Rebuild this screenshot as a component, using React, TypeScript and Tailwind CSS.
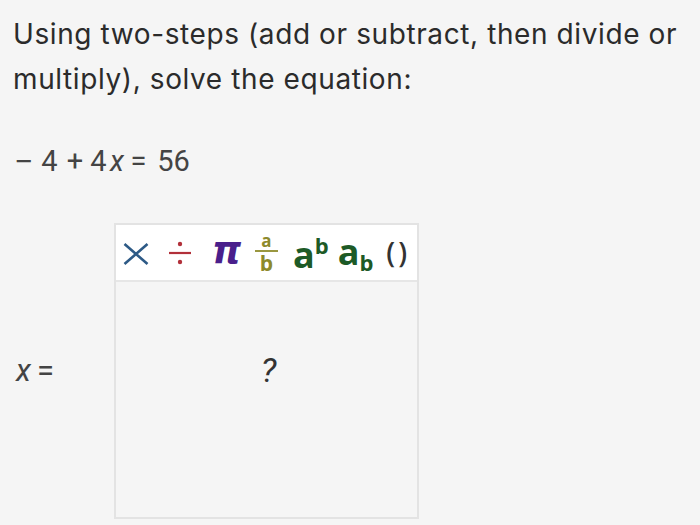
const mathFont = { fontFamily: "Roboto, 'Liberation Sans', sans-serif" };
const iconFont = { fontFamily: "'Open Sans', 'DejaVu Sans', sans-serif" };

export default function App() {
  return (
    <div className="w-[700px] h-[525px] bg-[#f5f5f5] overflow-hidden">
      <p
        className="pl-[13px] pt-[12px] text-[28px] leading-[45px] text-[#2b2b2b] tracking-[0.6px]"
        style={{ fontFamily: "Inter, 'Noto Sans', sans-serif" }}
      >
        Using two-steps (add or subtract, then divide or multiply), solve the equation:
      </p>

      <div className="pl-[12px] mt-[41px] text-[29px] leading-[36px] text-[#444] flex" style={mathFont}>
        <span className="w-[24px] text-center" style={{ fontFamily: "'Liberation Sans', sans-serif" }}>−</span>
        <span className="w-[27px] text-center">4</span>
        <span className="w-[24px] text-center">+</span>
        <span className="w-[23px] text-center">4</span>
        <span className="w-[10px] text-center italic">x</span>
        <span className="w-[37px] text-center">=</span>
        <span className="w-[33px] text-center">56</span>
      </div>

      <div className="flex mt-[44px]">
        <div className="w-[114px] flex items-center pl-[16px] text-[31px] text-[#444]" style={mathFont}>
          <span className="italic">x</span>
          <span className="ml-[6px]">=</span>
        </div>
        <div className="w-[305px] h-[296px] border-[2px] border-[#e3e3e3] flex flex-col">
          <div className="h-[57px] bg-white border-b-[2px] border-[#e6e6e6] flex items-center" style={iconFont}>
            <svg width="26" height="22" viewBox="0 0 26 22" className="ml-[7px] mt-[3px]">
              <path d="M1.5 1 L24.5 21 M24.5 1 L1.5 21" stroke="#2d5a86" strokeWidth="2.6" />
            </svg>
            <svg width="24" height="24" viewBox="0 0 24 24" className="ml-[19px]">
              <path d="M1 12 H23" stroke="#b2303a" strokeWidth="2.2" />
              <circle cx="12" cy="3" r="2.2" fill="#b2303a" />
              <circle cx="12" cy="21" r="2.2" fill="#b2303a" />
            </svg>
            <span
              className="ml-[20px] w-[24px] text-center text-[37px] italic font-bold text-[#4a1f8c] leading-none -mt-[4px]"
              style={{ fontFamily: "'DejaVu Sans', sans-serif" }}
            >
              π
            </span>
            <span className="ml-[19px] w-[23px] flex flex-col items-center text-[#8d8a2c] font-bold">
              <span className="text-[17px] leading-[17px]">a</span>
              <span className="w-[23px] h-[2px] bg-[#9a9740] my-[1px]" />
              <span className="text-[21px] leading-[21px]">b</span>
            </span>
            <span className="ml-[15px] text-[#1d5a26] font-bold leading-none mt-[2px]">
              <span className="text-[36px]">a</span>
              <span className="text-[22px] align-[14px]">b</span>
            </span>
            <span className="ml-[9px] text-[#1d5a26] font-bold leading-none mt-[2px]">
              <span className="text-[36px]">a</span>
              <span className="text-[22px] align-[-6px]">b</span>
            </span>
            <span className="ml-[13px] text-[28px] text-[#333] font-semibold leading-none tracking-[3px] -mt-[2px]">()</span>
          </div>
          <div className="flex-1 flex items-center justify-center pb-[58px]">
            <span className="text-[34px] italic text-[#333] ml-[4px]" style={mathFont}>?</span>
          </div>
        </div>
      </div>
    </div>
  );
}
